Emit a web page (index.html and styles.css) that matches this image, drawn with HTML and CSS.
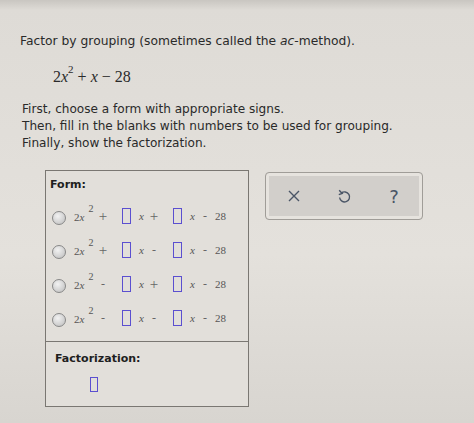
FILE: index.html
```html
<!DOCTYPE html>
<html lang="en">
<head>
    <meta charset="UTF-8">
    <title>Factor by grouping</title>
    <link rel="stylesheet" href="styles.css">
</head>
<body>
    <div class="page">
        <p class="prompt">Factor by grouping (sometimes called the <i>ac</i>-method).</p>
        <div class="equation">2<i>x</i><sup>2</sup> + <i>x</i> &minus; 28</div>
        <p class="steps">
            First, choose a form with appropriate signs.<br>
            Then, fill in the blanks with numbers to be used for grouping.<br>
            Finally, show the factorization.
        </p>

        <div class="work">
            <div class="answer">
                <div class="section">
                    <div class="label">Form:</div>
                    <div class="forms">
                        <div class="form-row">
                            <span class="radio"></span>
                            <span class="term">2<i>x</i><sup>2</sup></span>
                            <span class="op">+</span>
                            <span class="blank"></span><i class="var">x</i>
                            <span class="op">+</span>
                            <span class="blank"></span><i class="var">x</i>
                            <span class="op small">-</span>
                            <span class="num">28</span>
                        </div>
                        <div class="form-row">
                            <span class="radio"></span>
                            <span class="term">2<i>x</i><sup>2</sup></span>
                            <span class="op">+</span>
                            <span class="blank"></span><i class="var">x</i>
                            <span class="op small">-</span>
                            <span class="blank"></span><i class="var">x</i>
                            <span class="op small">-</span>
                            <span class="num">28</span>
                        </div>
                        <div class="form-row">
                            <span class="radio"></span>
                            <span class="term">2<i>x</i><sup>2</sup></span>
                            <span class="op small">-</span>
                            <span class="blank"></span><i class="var">x</i>
                            <span class="op">+</span>
                            <span class="blank"></span><i class="var">x</i>
                            <span class="op small">-</span>
                            <span class="num">28</span>
                        </div>
                        <div class="form-row">
                            <span class="radio"></span>
                            <span class="term">2<i>x</i><sup>2</sup></span>
                            <span class="op small">-</span>
                            <span class="blank"></span><i class="var">x</i>
                            <span class="op small">-</span>
                            <span class="blank"></span><i class="var">x</i>
                            <span class="op small">-</span>
                            <span class="num">28</span>
                        </div>
                    </div>
                </div>
                <div class="section factor">
                    <div class="label">Factorization:</div>
                    <span class="blank big"></span>
                </div>
            </div>

            <div class="tools">
                <button class="tool" aria-label="Clear">
                    <svg width="14" height="14" viewBox="0 0 14 14"><path d="M2 2 L12 12 M12 2 L2 12" stroke="#4a5566" stroke-width="1.4" fill="none"/></svg>
                </button>
                <button class="tool" aria-label="Undo">
                    <svg width="14" height="16" viewBox="0 0 14 16"><path d="M4.2 5.2 A5 5 0 1 1 2.6 9.5" stroke="#4a5566" stroke-width="1.4" fill="none"/><path d="M2.2 2.2 L5.2 5.4 L1.8 6.6" stroke="#4a5566" stroke-width="1.4" fill="none"/></svg>
                </button>
                <button class="tool help" aria-label="Help">?</button>
            </div>
        </div>
    </div>
</body>
</html>
```

FILE: styles.css
```css
body {
    margin: 0;
    background: linear-gradient(to bottom, #c9c6c1 0px, #dedbd6 10px, #e4e1dc 60%, #d8d5d0 100%);
    font-family: "DejaVu Sans", Verdana, sans-serif;
    color: #2a2a2a;
    height: 423px;
    overflow: hidden;
}

.page {
    padding: 34px 0 0 20px;
}

.prompt {
    margin: 0;
    font-size: 12.3px;
}

.equation {
    margin: 20px 0 0 33px;
    font-family: "Liberation Serif", "Times New Roman", serif;
    font-size: 16px;
}

.equation sup {
    font-size: 11px;
    vertical-align: 9px;
    line-height: 0;
}

.steps {
    margin: 15px 0 0 2px;
    font-size: 12.1px;
    line-height: 17px;
}

.work {
    display: flex;
    align-items: flex-start;
    margin: 18px 0 0 25px;
}

.answer {
    width: 202px;
    border: 1px solid #7a7772;
    background: #e2dfda;
}

.section {
    padding: 7px 0 0 4px;
}

.label {
    font-size: 11px;
    font-weight: bold;
    color: #1e1e1e;
}

.forms {
    height: 142px;
    padding: 8px 0 0 2px;
}

.form-row {
    display: flex;
    align-items: center;
    height: 34px;
    font-family: "Liberation Serif", "Times New Roman", serif;
    font-size: 11px;
    color: #555;
}

.radio {
    width: 12px;
    height: 12px;
    border-radius: 50%;
    border: 1px solid #888;
    background: radial-gradient(circle at 40% 35%, #f2f2f2, #bcbcbc);
    margin-right: 8px;
    margin-top: 4px;
}

.term {
    width: 22px;
}

.term sup {
    font-size: 10px;
    vertical-align: 9px;
    line-height: 0;
    margin-left: 4px;
}

.op {
    width: 14px;
    text-align: center;
    font-size: 15px;
    color: #666;
}

.op.small {
    font-size: 12px;
}

.blank {
    width: 7px;
    height: 14px;
    border: 1.5px solid #5b4fd0;
    margin-left: 12px;
    margin-right: 8px;
}

.var {
    width: 8px;
}

.num {
    margin-left: 3px;
}

.factor {
    border-top: 1px solid #7a7772;
    height: 54px;
    padding-top: 10px;
    padding-left: 9px;
}

.blank.big {
    display: block;
    width: 6px;
    height: 13px;
    margin: 12px 0 0 35px;
}

.tools {
    display: flex;
    justify-content: space-around;
    align-items: center;
    width: 150px;
    height: 46px;
    margin: 2px 0 0 16px;
    padding: 0 3px;
    border: 1px solid #a09d98;
    border-radius: 4px;
    background: #d2cfcb;
    box-shadow: inset 0 0 0 3px #e6e3de;
}

.tool {
    border: none;
    background: none;
    padding: 0;
    display: flex;
    align-items: center;
    justify-content: center;
    width: 20px;
    height: 20px;
}

.help {
    font-family: "DejaVu Sans", sans-serif;
    font-size: 18px;
    color: #4a5566;
}
```
